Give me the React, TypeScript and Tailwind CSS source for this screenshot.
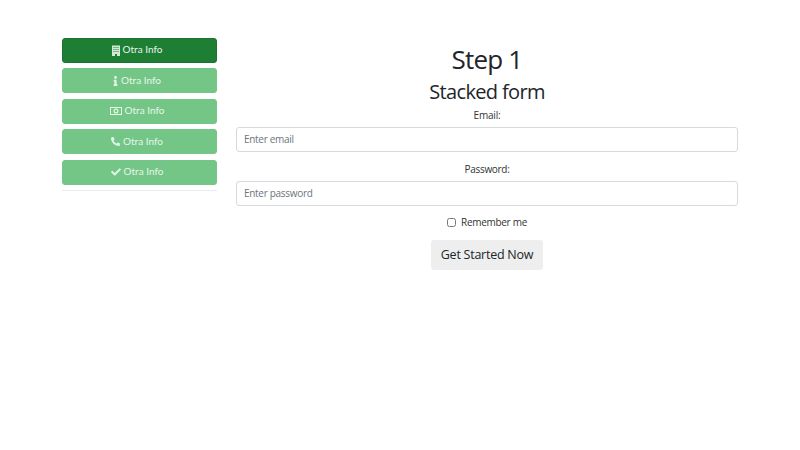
import type { FC, ReactNode } from "react";
import { FaCheck, FaInfo, FaPhoneAlt } from "react-icons/fa";

interface StepButtonProps {
  icon: ReactNode;
  active?: boolean;
}

const StepButton: FC<StepButtonProps> = ({ icon, active }) => (
  <div
    className={
      (active ? "bg-[#1e7e34] border-[#1c7430]" : "bg-[#74c687] border-[#74c687]") +
      " flex h-[25px] items-center justify-center gap-[3px] rounded-[3px] border pr-[5px] text-[10px] text-[#e6f5ea]"
    }
    style={{ fontFamily: "Lato, sans-serif" }}
  >
    {icon}
    <span className="pb-[1px]">Otra Info</span>
  </div>
);

const BuildingIcon = () => (
  <svg viewBox="0 0 8 11" className="h-[11px] w-[8px]" fill="currentColor">
    <path
      fillRule="evenodd"
      d="M0 .5h8V11H5V9H3v2H0zM1.5 2v1h1V2zm2 0v1h1V2zm2 0v1h1V2zm-4 2v1h1V4zm2 0v1h1V4zm2 0v1h1V4zm-4 2v1h1V6zm2 0v1h1V6zm2 0v1h1V6z"
      opacity="0.9"
    />
  </svg>
);

const MoneyIcon = () => (
  <svg viewBox="0 0 12 8" className="h-[8px] w-[12px]" fill="currentColor">
    <path
      fillRule="evenodd"
      d="M0 0h12v8H0zm1 1v6h10V1zm5 .5a2.5 2.5 0 1 1 0 5 2.5 2.5 0 0 1 0-5zm0 1.2a1.3 1.3 0 1 0 0 2.6 1.3 1.3 0 0 0 0-2.6z"
    />
  </svg>
);

const inputClass =
  "h-[24.5px] w-full rounded-[3px] border border-[#d6dade] bg-white px-[7px] text-[10px] tracking-[-0.3px] text-[#495057] placeholder:text-[#6c757d] outline-none";

export default function App() {
  return (
    <div
      className="flex h-[450px] w-[800px] gap-[19px] bg-white pl-[62px] pr-[62px] pt-[37.5px] text-[#333333]"
      style={{ fontFamily: '"Open Sans", sans-serif' }}
    >
      <div className="w-[155px] shrink-0">
        <div className="flex flex-col gap-[5.6px] border-b border-[#e9ecef] pb-[5.5px]">
          <StepButton active icon={<BuildingIcon />} />
          <StepButton icon={<FaInfo className="h-[10px] w-[5px]" />} />
          <StepButton icon={<MoneyIcon />} />
          <StepButton icon={<FaPhoneAlt className="h-[9px] w-[9px]" />} />
          <StepButton icon={<FaCheck className="h-[10px] w-[10px]" />} />
        </div>
      </div>
      <div className="flex flex-1 flex-col items-center">
        <h1 className="mt-[3.5px] text-[26px] leading-[36px] tracking-[-0.8px] text-[#212529]">
          Step 1
        </h1>
        <h2 className="mt-[1px] text-[20px] leading-[28px] tracking-[-0.65px] text-[#212529]">
          Stacked form
        </h2>
        <label className="mt-[1px] text-[10px] leading-[16px] tracking-[-0.2px]">Email:</label>
        <input className={inputClass + " mt-[4px]"} placeholder="Enter email" />
        <label className="mt-[9.5px] text-[10px] leading-[16px] tracking-[-0.3px]">Password:</label>
        <input className={inputClass + " mt-[4px]"} placeholder="Enter password" />
        <label className="mt-[9px] flex h-[16px] items-center gap-[5px] text-[10px] tracking-[-0.3px]">
          <input type="checkbox" className="h-[9px] w-[9px]" />
          Remember me
        </label>
        <button className="mt-[9.5px] h-[30px] w-[112px] rounded-[3px] bg-[#eeeeee] pt-[1px] text-[12.5px] tracking-[-0.25px] text-[#212529]">
          Get Started Now
        </button>
      </div>
    </div>
  );
}
